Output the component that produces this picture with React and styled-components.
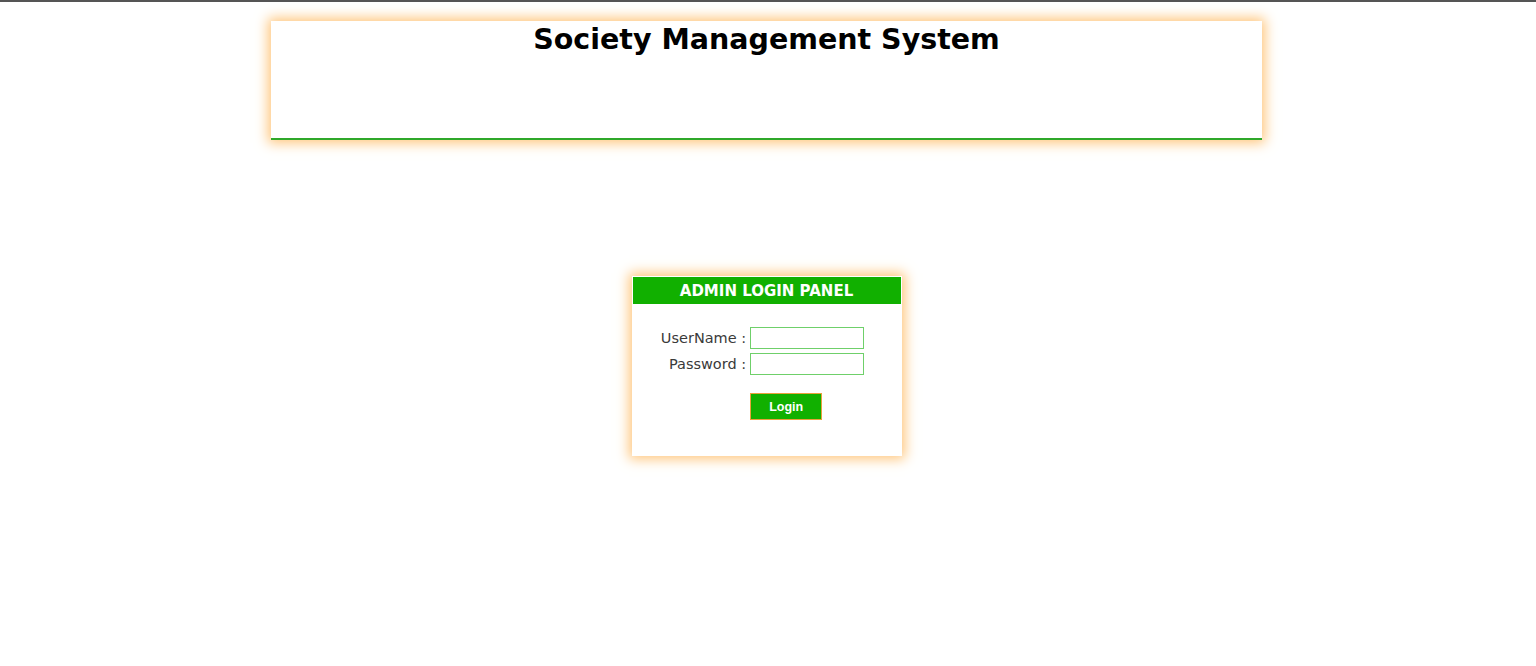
import React from 'react'
import styled, { createGlobalStyle } from 'styled-components'

const GlobalStyle = createGlobalStyle`
    html, body {
        margin: 0;
        padding: 0;
        background: #ffffff;
    }
    body {
        border-top: 2px solid #555555;
        padding-right: 3px;
        font-family: "DejaVu Sans", Verdana, sans-serif;
        min-height: 664px;
    }
`;

const App = () => {
    return (
        <>
            <GlobalStyle />
            <Header>
                <h1>Society Management System</h1>
            </Header>
            <Panel>
                <PanelTitle>ADMIN LOGIN PANEL</PanelTitle>
                <LoginForm onSubmit={(e) => e.preventDefault()}>
                    <Label htmlFor="username">UserName :</Label>
                    <Input id="username" type="text" />
                    <Label htmlFor="password">Password :</Label>
                    <Input id="password" type="password" />
                    <LoginButton type="submit">Login</LoginButton>
                </LoginForm>
            </Panel>
        </>
    )
}

export default App


const Header = styled.header`
    width: 991px;
    height: 117px;
    margin: 19px auto 0;
    background: #ffffff;
    border-bottom: 2px solid #2fa82a;
    box-shadow: 0 0 12px 3px #ffc57a;
    h1 {
        margin: 0;
        padding-top: 2px;
        text-align: center;
        font-size: 28.5px;
        font-weight: bold;
        color: #000000;
    }
`;

const Panel = styled.section`
    width: 268px;
    margin: 136px auto 0;
    padding-bottom: 35px;
    background: #ffffff;
    border: 1px solid #ffffff;
    box-shadow: 0 0 12px 3px #ffc57a;
`;

const PanelTitle = styled.h2`
    margin: 0;
    height: 27px;
    line-height: 29px;
    background: #11b000;
    color: #ffffff;
    text-align: center;
    font-size: 15px;
    font-weight: bold;
`;

const LoginForm = styled.form`
    display: grid;
    grid-template-columns: auto auto;
    justify-content: center;
    align-items: center;
    column-gap: 4px;
    row-gap: 4px;
    padding-top: 23px;
    margin-left: -8px;
`;

const Label = styled.label`
    text-align: right;
    font-size: 14.5px;
    color: #3a3a3a;
`;

const Input = styled.input`
    box-sizing: border-box;
    width: 114px;
    height: 22px;
    margin: 0;
    border: 1px solid #6fd06a;
    outline: none;
    font-size: 13px;
`;

const LoginButton = styled.button`
    grid-column: 2;
    justify-self: start;
    margin-top: 14px;
    width: 72px;
    height: 27px;
    background: #11b000;
    border: 1px solid #eaa23a;
    color: #ffffff;
    font-family: "Liberation Sans", Arial, sans-serif;
    font-weight: bold;
    font-size: 12.5px;
    cursor: pointer;
`;
